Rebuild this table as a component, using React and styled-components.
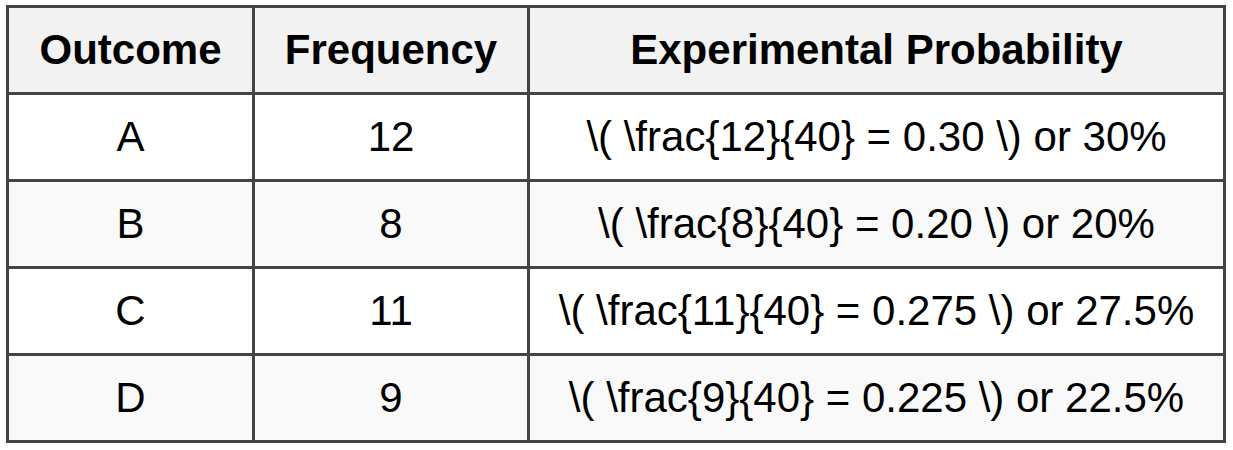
import styled, { createGlobalStyle } from 'styled-components'

const GlobalStyle = createGlobalStyle`
  body {
    margin: 0;
    background: #fff;
    font-family: "Liberation Sans", Arial, sans-serif;
  }
`

const rows = [
  { outcome: 'A', freq: 12, prob: '\\( \\frac{12}{40} = 0.30 \\) or 30%' },
  { outcome: 'B', freq: 8, prob: '\\( \\frac{8}{40} = 0.20 \\) or 20%' },
  { outcome: 'C', freq: 11, prob: '\\( \\frac{11}{40} = 0.275 \\) or 27.5%' },
  { outcome: 'D', freq: 9, prob: '\\( \\frac{9}{40} = 0.225 \\) or 22.5%' }
]

const App = () => {
  return (
    <Page>
      <GlobalStyle />
      <Table>
        <colgroup>
          <col style={{ width: 246 }} />
          <col style={{ width: 275 }} />
          <col />
        </colgroup>
        <thead>
          <tr>
            <Th>Outcome</Th>
            <Th>Frequency</Th>
            <Th>Experimental Probability</Th>
          </tr>
        </thead>
        <tbody>
          {rows.map((r) => (
            <Row key={r.outcome}>
              <Td>{r.outcome}</Td>
              <Td>{r.freq}</Td>
              <Td>{r.prob}</Td>
            </Row>
          ))}
        </tbody>
      </Table>
    </Page>
  )
}

export default App

const Page = styled.div`
  padding: 5px 5px 5px 6px;
`

const Table = styled.table`
  width: 1220px;
  border-collapse: collapse;
  table-layout: fixed;
  border: 3px solid #444;
`

const Th = styled.th`
  background: #f2f2f2;
  border: 3px solid #444;
  padding: 18px 8px;
  font-size: 42px;
  font-weight: 700;
  text-align: center;
  color: #000;
`

const Row = styled.tr`
  background: #fff;

  &:nth-child(even) {
    background: #f9f9f9;
  }
`

const Td = styled.td`
  border: 3px solid #444;
  padding: 18px 8px;
  font-size: 42px;
  text-align: center;
  color: #000;
`
